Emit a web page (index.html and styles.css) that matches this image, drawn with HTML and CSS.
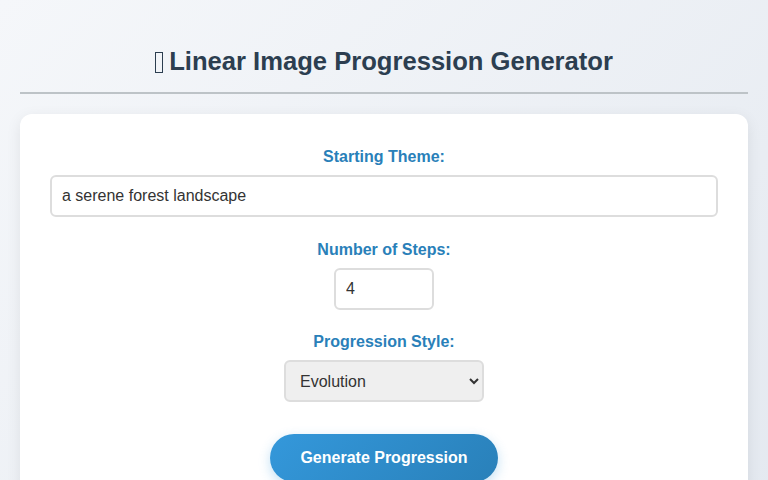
FILE: index.html
```html
<!DOCTYPE html>
<html lang="en">
<head>
    <meta charset="UTF-8">
    <title>Linear Image Progression Generator</title>
    <link rel="stylesheet" href="styles.css">
</head>
<body>
    <h1><span class="glyph"></span> Linear Image Progression Generator</h1>
    <div class="card">
        <div class="form-group">
            <label for="theme">Starting Theme:</label>
            <input type="text" id="theme" class="wide" value="a serene forest landscape">
        </div>
        <div class="form-group">
            <label for="steps">Number of Steps:</label>
            <input type="number" id="steps" class="small" value="4" min="2" max="10">
        </div>
        <div class="form-group">
            <label for="style">Progression Style:</label>
            <select id="style">
                <option>Evolution</option>
                <option>Seasons</option>
                <option>Time of Day</option>
                <option>Abstract</option>
            </select>
        </div>
        <div class="actions">
            <button class="generate">Generate Progression</button>
        </div>
    </div>
</body>
</html>
```

FILE: styles.css
```css
body{margin:0;padding:20px;font-family:"Liberation Sans",Arial,sans-serif;background:linear-gradient(135deg,#f5f7fa 0%,#e4e9f0 100%);min-height:100vh;box-sizing:border-box;color:#333;}
h1{margin:27px 0 20px;padding-bottom:16px;text-align:center;font-size:25.6px;color:#2c3e50;border-bottom:2px solid #bdc3c7;}
.glyph{display:inline-block;width:6px;height:19px;border:1px solid #2c3e50;vertical-align:-3px;margin-right:-1px;}
.card{background:#fff;border-radius:12px;padding:34px 30px 30px;box-shadow:0 4px 15px rgba(0,0,0,0.08);}
.form-group{margin-bottom:23.5px;text-align:center;}
.form-group label{display:block;margin-bottom:9px;font-weight:bold;font-size:16px;color:#2980b9;}
input,select{font-family:"Liberation Sans",Arial,sans-serif;font-size:16px;color:#333;border:2px solid #ddd;border-radius:6px;padding:10px;box-sizing:border-box;}
input.wide{width:100%;height:42px;}
input.small{width:100px;height:42px;}
select{width:200px;height:42px;padding:10px;}
.actions{text-align:center;padding-top:8.5px;}
.generate{font-family:"Liberation Sans",Arial,sans-serif;font-size:16px;font-weight:bold;color:#fff;border:none;border-radius:25px;padding:15px 30px;background:linear-gradient(135deg,#3498db,#2980b9);box-shadow:0 4px 12px rgba(52,152,219,0.3);}
```
